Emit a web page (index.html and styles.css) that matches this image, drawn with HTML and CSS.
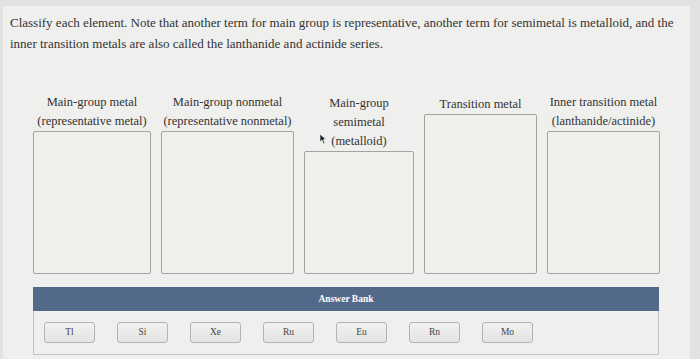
FILE: index.html
```html
<!DOCTYPE html>
<html lang="en">
<head>
    <meta charset="UTF-8">
    <meta name="viewport" content="width=device-width, initial-scale=1.0">
    <title>Classify each element</title>
    <link rel="stylesheet" href="styles.css">
</head>
<body>

    <div class="sheet">
        <p class="prompt">
            Classify each element. Note that another term for main group is representative, another term for semimetal is metalloid, and the
            inner transition metals are also called the lanthanide and actinide series.
        </p>

        <div class="bins">
            <div class="bin bin-1">
                <h4>Main-group metal<br>(representative metal)</h4>
                <div class="drop"></div>
            </div>
            <div class="bin bin-2">
                <h4>Main-group nonmetal<br>(representative nonmetal)</h4>
                <div class="drop"></div>
            </div>
            <div class="bin bin-3">
                <h4>Main-group<br>semimetal<br>(metalloid)</h4>
                <div class="drop"></div>
                <svg class="cursor" width="8" height="12" viewBox="0 0 8 12">
                    <path d="M1 1 L1 9 L3 7 L4.5 11 L5.8 10.4 L4.4 6.6 L7 6.6 Z" fill="#222" stroke="#fff" stroke-width="0.6"/>
                </svg>
            </div>
            <div class="bin bin-4">
                <h4>Transition metal</h4>
                <div class="drop"></div>
            </div>
            <div class="bin bin-5">
                <h4>Inner transition metal<br>(lanthanide/actinide)</h4>
                <div class="drop"></div>
            </div>
        </div>

        <div class="bank">
            <div class="bank-head">Answer Bank</div>
            <div class="bank-tray">
                <span class="chip">Tl</span>
                <span class="chip">Si</span>
                <span class="chip">Xe</span>
                <span class="chip">Ru</span>
                <span class="chip">Eu</span>
                <span class="chip">Rn</span>
                <span class="chip">Mo</span>
            </div>
        </div>
    </div>

</body>
</html>
```

FILE: styles.css
```css
body{
    margin: 0;
    background: #e2e2e1;
    height: 359px;
    overflow: hidden;
    font-family: "Liberation Serif", "Times New Roman", serif;
    color: #333;
}
.sheet{
    margin: 6px 0 0 3px;
    width: 687px;
    height: 353px;
    background: #efefed;
}
.prompt{
    margin: 0;
    padding: 6px 10px 0 7px;
    font-size: 13px;
    line-height: 21px;
}

.bins{
    display: flex;
    align-items: flex-end;
    gap: 10px;
    margin: 39px 0 0 30px;
}
.bin{
    position: relative;
    display: flex;
    flex-direction: column;
    align-items: center;
}
.bin h4{
    margin: 0;
    font-weight: normal;
    font-size: 12.5px;
    line-height: 19px;
    text-align: center;
    white-space: nowrap;
}
.drop{
    width: 100%;
    box-sizing: border-box;
    border: 1px solid #a3a3a3;
    border-radius: 2px;
    background: #efefec;
}
.bin-1{ width: 118px; }
.bin-2{ width: 133px; }
.bin-3{ width: 110px; }
.bin-4{ width: 113px; }
.bin-5{ width: 113px; }
.bin-1 .drop, .bin-2 .drop, .bin-5 .drop{ height: 143px; }
.bin-3 .drop{ height: 123px; }
.bin-4 .drop{ height: 160px; }
.cursor{
    position: absolute;
    left: 15px;
    top: 39px;
}

.bank{
    margin: 13px 0 0 30px;
    width: 626px;
}
.bank-head{
    background: #52698a;
    color: #fff;
    font-size: 9.5px;
    font-weight: bold;
    text-align: center;
    height: 24px;
    line-height: 24px;
}
.bank-tray{
    display: flex;
    gap: 22px;
    height: 44px;
    box-sizing: border-box;
    padding: 11px 0 0 10px;
    border: 1px solid #c4c4c2;
    border-top: none;
}
.chip{
    width: 51px;
    height: 21px;
    box-sizing: border-box;
    border: 1px solid #b3b3b1;
    border-radius: 3px;
    background: linear-gradient(#f1f1ef, #e4e4e2);
    font-size: 9.5px;
    line-height: 19px;
    text-align: center;
    color: #444;
}
```
